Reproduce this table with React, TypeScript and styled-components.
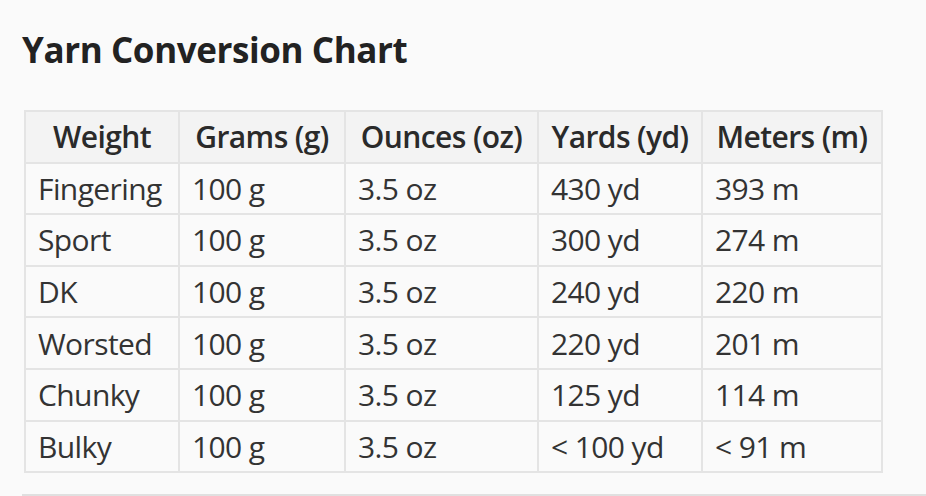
import React from "react";
import styled, { createGlobalStyle } from "styled-components";

const GlobalStyle = createGlobalStyle`
  html, body {
    margin: 0;
    padding: 0;
    background: #fafafa;
  }
  body {
    font-family: "Open Sans", "Noto Sans", sans-serif;
    color: #2d2d2d;
  }
`;

const rows = [
  ["Fingering", "100 g", "3.5 oz", "430 yd", "393 m"],
  ["Sport", "100 g", "3.5 oz", "300 yd", "274 m"],
  ["DK", "100 g", "3.5 oz", "240 yd", "220 m"],
  ["Worsted", "100 g", "3.5 oz", "220 yd", "201 m"],
  ["Chunky", "100 g", "3.5 oz", "125 yd", "114 m"],
  ["Bulky", "100 g", "3.5 oz", "< 100 yd", "< 91 m"],
];

const headers = ["Weight", "Grams (g)", "Ounces (oz)", "Yards (yd)", "Meters (m)"];
const widths = [154, 166, 193, 164, 180];

function App() {
  return (
    <>
      <GlobalStyle />
      <Page>
        <Title>Yarn Conversion Chart</Title>
        <Table>
          <colgroup>
            {widths.map((w, i) => (
              <col key={i} style={{ width: w }} />
            ))}
          </colgroup>
          <thead>
            <tr>
              {headers.map((h) => (
                <HeadCell key={h}>{h}</HeadCell>
              ))}
            </tr>
          </thead>
          <tbody>
            {rows.map((r) => (
              <tr key={r[0]}>
                {r.map((c, i) => (
                  <Cell key={i}>{c}</Cell>
                ))}
              </tr>
            ))}
          </tbody>
        </Table>
        <Rule />
      </Page>
    </>
  );
}

const Page = styled.div`
  padding: 26px 0 0 22px;
  height: 496px;
  box-sizing: border-box;
  overflow: hidden;
`;

const Title = styled.h2`
  margin: 0 0 36px 0;
  font-size: 35px;
  font-weight: 700;
  line-height: 48px;
  color: #222;
  letter-spacing: -0.4px;
`;

const Table = styled.table`
  margin-left: 2px;
  border-collapse: collapse;
  table-layout: fixed;
  width: 857px;
`;

const HeadCell = styled.th`
  height: 49.6px;
  padding: 0 6px;
  background: #f3f3f3;
  border: 2px solid #e4e4e4;
  font-size: 30px;
  font-weight: 600;
  text-align: center;
  color: #2a2a2a;
  white-space: nowrap;
  letter-spacing: -0.6px;
`;

const Cell = styled.td`
  height: 49.6px;
  padding: 0 10px 0 12px;
  background: #fafafa;
  border: 2px solid #e4e4e4;
  font-size: 30px;
  font-weight: 400;
  text-align: left;
  color: #333;
  white-space: nowrap;
  letter-spacing: -0.6px;
`;

const Rule = styled.hr`
  margin: 21px 0 0 0;
  border: none;
  border-top: 2px solid #e0e0e0;
`;

export default App;
